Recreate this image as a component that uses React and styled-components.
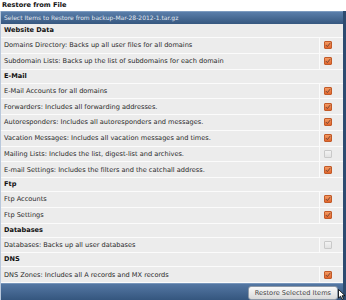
import React from "react";
import styled, { createGlobalStyle } from "styled-components";

const GlobalStyle = createGlobalStyle`
  html, body {
    margin: 0;
    padding: 0;
    background: #fff;
  }
  body {
    font-family: "DejaVu Sans", Verdana, sans-serif;
    width: 346px;
    height: 300px;
    overflow: hidden;
  }
`;

const Page = styled.div`
  position: relative;
  width: 346px;
  height: 300px;
  overflow: hidden;
`;

const Title = styled.div`
  height: 11px;
  line-height: 11px;
  padding-left: 2px;
  font-size: 6.6px;
  font-weight: bold;
  color: #111;
`;

const Panel = styled.div`
  box-sizing: border-box;
  width: 346px;
  border-left: 1px solid #b9c8dc;
  border-right: 3px solid #2d4b70;
`;

const HeaderBar = styled.div`
  height: 12px;
  line-height: 12px;
  padding-left: 3px;
  font-size: 6px;
  color: #e4eaf3;
  background: linear-gradient(#5a7eaa, #36577f);
  border-top: 1px solid #7d9bc0;
`;

const Section = styled.div`
  box-sizing: border-box;
  height: 14px;
  line-height: 13px;
  padding-left: 3px;
  font-size: 6.6px;
  font-weight: bold;
  color: #111;
  background: #ececec;
  border-bottom: 1px solid #fbfbfb;
`;

const Row = styled.div`
  box-sizing: border-box;
  display: grid;
  grid-template-columns: 1fr 23px;
  height: 15.75px;
  background: #ececec;
  border-bottom: 1px solid #fbfbfb;
`;

const Label = styled.div`
  display: flex;
  align-items: center;
  padding-left: 3px;
  font-size: 6.6px;
  color: #2a2a2a;
  white-space: nowrap;
  border-right: 1px solid #fbfbfb;
`;

const BoxCell = styled.div`
  display: flex;
  align-items: center;
  padding-left: 4px;
`;

const Box = styled.span`
  box-sizing: border-box;
  display: inline-flex;
  align-items: center;
  justify-content: center;
  width: 8px;
  height: 8px;
  border-radius: 1px;
  border: 1px solid ${(p) => (p.$checked ? "#c25a28" : "#c9c9c9")};
  background: ${(p) =>
    p.$checked
      ? "linear-gradient(#f49a62, #e0652d)"
      : "linear-gradient(#f3f3f3, #e2e2e2)"};
`;

const Footer = styled.div`
  display: flex;
  justify-content: flex-end;
  align-items: flex-start;
  height: 17px;
  padding-right: 5px;
  background: linear-gradient(#5477a3, #33547c);
  border-top: 1px solid #7896bb;
`;

const Button = styled.button`
  height: 14px;
  padding: 0 6px;
  font-family: "DejaVu Sans", Verdana, sans-serif;
  font-size: 6.6px;
  color: #444;
  background: linear-gradient(#fafafa, #d8d8d8);
  border: 1px solid #8d99a8;
  border-radius: 3px;
  margin-top: 2px;
`;

const Cursor = styled.svg`
  position: absolute;
  right: 0;
  bottom: 0;
`;

function Check({ checked }) {
  return (
    <Box $checked={checked}>
      {checked && (
        <svg width="6" height="6" viewBox="0 0 6 6">
          <path d="M0.8 3 L2.4 4.6 L5.4 0.8" fill="none" stroke="#6d4335" strokeWidth="0.9" />
        </svg>
      )}
    </Box>
  );
}

const groups = [
  {
    name: "Website Data",
    items: [
      ["Domains Directory: Backs up all user files for all domains", true],
      ["Subdomain Lists: Backs up the list of subdomains for each domain", true],
    ],
  },
  {
    name: "E-Mail",
    items: [
      ["E-Mail Accounts for all domains", true],
      ["Forwarders: Includes all forwarding addresses.", true],
      ["Autoresponders: Includes all autoresponders and messages.", true],
      ["Vacation Messages: Includes all vacation messages and times.", true],
      ["Mailing Lists: Includes the list, digest-list and archives.", false],
      ["E-mail Settings: Includes the filters and the catchall address.", true],
    ],
  },
  {
    name: "Ftp",
    items: [
      ["Ftp Accounts", true],
      ["Ftp Settings", true],
    ],
  },
  {
    name: "Databases",
    items: [["Databases: Backs up all user databases", false]],
  },
  {
    name: "DNS",
    items: [["DNS Zones: Includes all A records and MX records", true]],
  },
];

export default function App() {
  return (
    <Page>
      <GlobalStyle />
      <Title>Restore from File</Title>
      <Panel>
        <HeaderBar>Select Items to Restore from backup-Mar-28-2012-1.tar.gz</HeaderBar>
        {groups.map((g) => (
          <React.Fragment key={g.name}>
            <Section>{g.name}</Section>
            {g.items.map(([text, checked]) => (
              <Row key={text}>
                <Label>{text}</Label>
                <BoxCell>
                  <Check checked={checked} />
                </BoxCell>
              </Row>
            ))}
          </React.Fragment>
        ))}
        <Footer>
          <Button>Restore Selected Items</Button>
        </Footer>
      </Panel>
      <Cursor width="8" height="11" viewBox="0 0 8 11">
        <path d="M0.5 0.5 L0.5 9 L2.6 7.2 L4 10.4 L5.4 9.8 L4.1 6.7 L7 6.7 Z" fill="#fff" stroke="#000" strokeWidth="0.8" />
      </Cursor>
    </Page>
  );
}
